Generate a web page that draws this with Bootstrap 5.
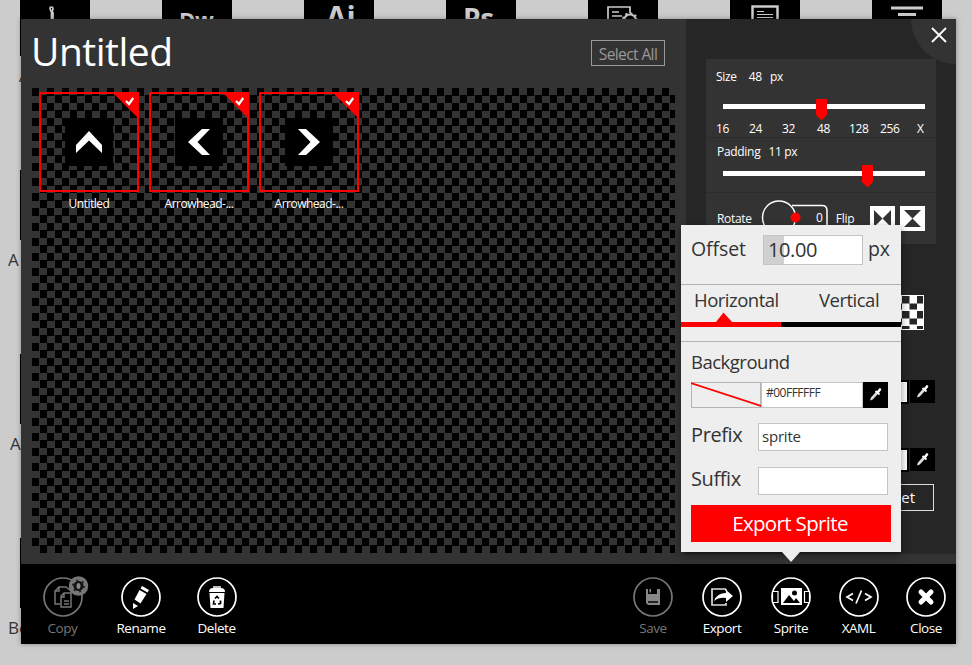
<!DOCTYPE html>
<html lang="en">
<head>
<meta charset="utf-8">
<meta name="viewport" content="width=device-width, initial-scale=1">
<title>Untitled</title>
<link href="https://cdn.jsdelivr.net/npm/bootstrap@5.3.0/dist/css/bootstrap.min.css" rel="stylesheet">
<style>
body{width:972px;height:665px;overflow:hidden;background:#ccc;color:#333;font-family:"Open Sans","Noto Sans",sans-serif;line-height:1;letter-spacing:-.02em}
svg{display:block;flex:none}
/* icon library behind the dialog */
.library{padding:0 0 0 20px;height:665px;overflow:hidden}
.library-row{height:184px;gap:72px}
.library-row:first-child{height:170px}
.library-row:first-child .tile{height:56px}
.library-row:last-child{height:127px}
.tile{width:70px;height:70px;background:#000}
.tile-name{font-size:17px;margin-top:11px;letter-spacing:0}
.shift-a{margin-left:-1px}.shift-b{margin-left:-12px}.shift-c{margin-left:-10px}
/* dialog */
.editor{left:21px;top:19px;width:935px;height:625px;background:#333;box-shadow:0 0 5px rgba(0,0,0,.35)}
.editor-body{height:545px}
.canvas-side{width:665px;padding:0 11px}
.canvas-head{height:69px;padding:21px 10px 0 0}
.doc-title{font-size:39px;line-height:1;margin:-9px 0 0 -1px;font-weight:400;letter-spacing:-.5px;color:#fff}
.btn-select{width:74px;height:26px;border:1px solid #999;color:#999;font-size:15.5px;border-radius:0;padding:0;letter-spacing:-.6px;line-height:26px}
.checker{width:643px;height:465px;background:#000 conic-gradient(#333 25%,#000 0 50%,#333 0 75%,#000 0) 0 0/15px 15px;padding:4px 0 0 7px;gap:10px}
.thumb{width:100px}
.thumb-frame{width:100px;height:100px;border:2px solid red}
.thumb-name{font-size:12px;margin-top:6px;letter-spacing:-.5px}
/* properties side */
.props{width:270px;height:535px;background:#262626;padding:40px 20px 0}
.props-panel{width:230px;height:185px;background:#333;font-size:12px;letter-spacing:-.3px}
.sec-size{height:79px;padding:12px 11px 0 10px;border-bottom:1px solid #2d2d2d}
.sec-pad{height:55px;padding:8px 11px 0;border-bottom:1px solid #2d2d2d}
.sec-pad svg{margin-top:7px}
.ticks{display:grid;grid-template-columns:33px 33px 35px 32px 31px 37px 1fr;margin-top:2px}
.rotate-row{height:50px;padding:6px 11px 0}
.rotate-row span{padding-top:14px}
.closer{right:0;top:0}
.alpha-btn{width:34px;height:35px;margin-top:51px;margin-right:12px}
.color-row{height:24px;margin-right:1px}
.color-row span{width:60px;background:#fff;border:2px solid #000;margin-right:1px}
.first-color{margin-top:50px}.second-color{margin-top:44px}
.btn-reset{width:80px;height:27px;border:1px solid #ddd;color:#fff;border-radius:0;font-size:15px;padding:0 18px 0 0;margin:12px 2px 0 0;text-align:right}
/* app bar */
.appbar{height:80px;background:#000;color:#fff;font-size:13.5px;letter-spacing:-.45px}
.bar-left{display:grid;grid-template-columns:83px 74px 77px}
.bar-right{display:grid;grid-template-columns:60px 78px 60px 75px 60px}
.tool{padding-top:10px}
.tool span{margin-top:2px}
.off{color:#777}
/* sprite flyout */
.flyout{left:660px;top:206px;width:220px;height:327px;background:#eee;box-shadow:0 3px 8px rgba(0,0,0,.45);font-size:19.5px;letter-spacing:-.1px}
.flyout-tip{left:101px;top:327px}
.offset-row{height:60px;padding:10px 10px 0;border-bottom:1px solid #b4b4b4}
.offset-row span:first-child{width:57px}
.offset-box{width:100px;height:30px;border:1px solid #c4c4c4;margin-left:15px;margin-right:5px;background:linear-gradient(90deg,#d0d0d0 20px,#fff 0);padding:4px 4px;font-size:20px;letter-spacing:-.4px}
.tabs-row{height:57px;border-bottom:1px solid #b4b4b4;font-size:18.5px;letter-spacing:-.5px}
.tab-h{padding:6px 0 0 13px;width:138px}
.tab-v{padding-top:6px}
.tabs-row svg{margin-top:1px}
.bg-label{padding:11px 10px 0;height:40px;letter-spacing:-.5px;font-size:18.5px}
.bg-row{height:26px;padding-left:10px}
.hex{width:102px;border:1px solid #c4c4c4;background:#fff;font-size:12px;padding:4px 4px;letter-spacing:-.5px}
.field-row{height:44px;padding:0 13px 0 10px}
.field-row.first{margin-top:15px}
.field-row.last{height:38px}
.field-row label{width:67px;padding-top:2px;font-size:20px;letter-spacing:-.4px}
.field-row input{width:130px;height:28px;border:1px solid #c4c4c4;border-radius:0;padding:0 3px 2px;font-size:15px;color:#333;background:#fff;letter-spacing:-.2px}
.btn-sprite{width:200px;height:37px;margin-left:10px;background:red;color:#fff;border:0;border-radius:0;font-size:20.5px;padding:0 2px 0 0;letter-spacing:-.65px;line-height:37px;display:block}
</style>
<script src="https://cdn.jsdelivr.net/npm/bootstrap@5.3.0/dist/js/bootstrap.bundle.min.js"></script>
</head>
<body class="position-relative">
<svg width="0" height="0" class="position-absolute"><defs>
<g id="dropper"><rect width="25" height="23" fill="#000"/><path d="M7 17.500l.8-2.800 5-5.600 2 1.800-5 5.700z" fill="#ddd"/><path d="M12.500 8l4 3.500" stroke="#fff" stroke-width="1.800"/><path d="M15 9l2-2.500" stroke="#fff" stroke-width="2.600" stroke-linecap="round"/></g>
<g id="tick"><path d="M0 0h24v24z" fill="red"/><path d="M13 8l3 3 4.200-6" fill="none" stroke="#fff" stroke-width="2.200"/></g>
</defs></svg>

<div class="library">
  <div class="library-row d-flex">
    <div><div class="tile"><svg width="70" height="56"><path d="M31.500 20v-8q-3-5 0-5t0 6M33 12v7" fill="none" stroke="#ccc" stroke-width="1.700"/></svg></div><div class="tile-name shift-a">A</div></div>
    <div class="tile"><svg width="70" height="56"><text x="17" y="28" font-size="22" font-weight="700" fill="#ccc">Dw</text></svg></div>
    <div class="tile"><svg width="70" height="56"><text x="22" y="28" font-size="30" font-weight="700" fill="#ccc">Ai</text></svg></div>
    <div class="tile"><svg width="70" height="56"><text x="17" y="29" font-size="28" font-weight="700" fill="#ccc">Ps</text></svg></div>
    <div class="tile"><svg width="70" height="56"><path d="M20 22V7h22v6M24 12h7M24 16h10" fill="none" stroke="#ccc" stroke-width="1.700"/><circle cx="42" cy="20.500" r="6" fill="#000" stroke="#ccc" stroke-width="2.200"/><circle cx="42" cy="20.500" r="7.500" fill="none" stroke="#ccc" stroke-width="1.500" stroke-dasharray="2.500 2.500"/></svg></div>
    <div class="tile"><svg width="70" height="56"><path d="M22.500 22V6.500h25V22" fill="none" stroke="#ccc" stroke-width="2.500"/><path d="M27 11.500h7M27 14.500h16M27 17.500h16" stroke="#ccc"/></svg></div>
    <div class="tile"><svg width="70" height="56"><path d="M19 8h32M26 14.500h18" stroke="#ccc" stroke-width="3"/></svg></div>
  </div>
  <div class="library-row"><div class="tile"></div><div class="tile-name shift-b">A</div></div>
  <div class="library-row"><div class="tile"></div><div class="tile-name shift-c">A</div></div>
  <div class="library-row"><div class="tile"></div><div class="tile-name shift-b">Be</div></div>
</div>

<main class="editor position-absolute">
  <div class="editor-body d-flex">
    <section class="canvas-side">
      <header class="canvas-head d-flex justify-content-between align-items-start">
        <h1 class="doc-title">Untitled</h1>
        <button class="btn btn-select">Select All</button>
      </header>
      <div class="checker d-flex">
        <div class="thumb text-center text-white"><div class="thumb-frame"><svg width="96" height="96"><rect x="24" y="24" width="48" height="48"/><path d="M35 51L48 37 61 51V59L48 46.500 35 59z" fill="#fff"/><use href="#tick" x="72" y="-1"/></svg></div><div class="thumb-name">Untitled</div></div>
        <div class="thumb text-center text-white"><div class="thumb-frame"><svg width="96" height="96"><rect x="24" y="24" width="48" height="48"/><path d="M51 35L37 48 51 61H59L46.500 48 59 35z" fill="#fff"/><use href="#tick" x="72" y="-1"/></svg></div><div class="thumb-name">Arrowhead-...</div></div>
        <div class="thumb text-center text-white"><div class="thumb-frame"><svg width="96" height="96"><rect x="24" y="24" width="48" height="48"/><path d="M45 35L59 48 45 61H37L49.500 48 37 35z" fill="#fff"/><use href="#tick" x="72" y="-1"/></svg></div><div class="thumb-name">Arrowhead-...</div></div>
      </div>
    </section>
    <aside class="props">
      <div class="props-panel text-white">
        <div class="sec-size">
          <div class="d-flex"><span>Size</span><span class="ms-2 ps-1">48</span><span class="ms-2">px</span></div>
          <svg class="mt-3" width="209" height="22"><path d="M7 5h202v5H7z" fill="#fff"/><path d="M100 -1h11v17l-5.500 5.500L100 16z" fill="red"/></svg>
          <div class="ticks"><span>16</span><span>24</span><span>32</span><span>48</span><span>128</span><span>256</span><span>X</span></div>
        </div>
        <div class="sec-pad">
          <div class="d-flex"><span>Padding</span><span class="ms-2">11 px</span></div>
          <svg width="210" height="24"><path d="M6 6h202v5H6z" fill="#fff"/><path d="M145 0h11v17l-5.500 5.500L145 17z" fill="red"/></svg>
        </div>
        <div class="rotate-row d-flex">
          <span>Rotate</span>
          <svg class="ms-2" width="72" height="38"><path d="M32 6.500H62q5 0 5 5V27H36" fill="none" stroke="#fff" stroke-width="1.500"/><circle cx="19" cy="18.500" r="16.500" fill="#333" stroke="#fff" stroke-width="1.500"/><circle cx="35.500" cy="18.500" r="5" fill="red"/><text x="56" y="22.500" font-size="12" fill="#fff">0</text></svg>
          <span class="ms-1">Flip</span>
          <svg class="ms-auto mt-1" width="55" height="28"><path d="M0 3h25v25H0zM30 3h25v25H30z" fill="#fff"/><path d="M4 7v17l8.500-8.500zM21 7v17l-8.500-8.500zM34 7h17l-8.500 8.500zM34 24h17l-8.500-8.500z" fill="#333"/></svg>
        </div>
      </div>
      <svg class="alpha-btn ms-auto" width="34" height="35"><defs><pattern id="cells" width="15" height="15" patternUnits="userSpaceOnUse" patternTransform="translate(10 0)"><rect width="15" height="15" fill="#fff"/><path d="M2 1h7.500v7.500H2zM9.500 8.500h5.500v6H9.500zM0 8.500h2v6H0z" fill="#262626"/></pattern></defs><rect x=".5" y=".5" width="33" height="34" fill="url(#cells)" stroke="#fff"/></svg>
      <div class="color-row first-color d-flex justify-content-end"><span></span><svg width="25" height="23"><use href="#dropper"/></svg></div>
      <div class="color-row second-color d-flex justify-content-end"><span></span><svg width="25" height="23"><use href="#dropper"/></svg></div>
      <button class="btn btn-reset d-block ms-auto">Reset</button>
    </aside>
    <svg class="closer position-absolute" width="45" height="45"><path d="M0 0h45v45A45 45 0 0 1 0 0z" fill="#333"/><path d="M21 9l14 14M35 9L21 23" stroke="#fff" stroke-width="1.800"/></svg>
  </div>

  <footer class="appbar d-flex justify-content-between">
    <div class="bar-left">
      <div class="tool off d-flex flex-column align-items-center"><svg width="54" height="46" viewBox="-27 -23 54 46" fill="none" stroke="#777"><circle r="19" stroke-width="1.700"/><path d="M-3 7H-8V-6l4-4H3l5 4v2M-4-10v4h-4" stroke-width="1.500"/><path d="M-2 10V-1l3-3H8V10zM1-4V0H-2M1 4H6M1 7H6" fill="#000" stroke-width="1.500"/><circle cx="15.500" cy="-11" r="7" fill="#111" stroke-width="4"/><circle cx="15.500" cy="-11" r="5.500" stroke="#222" stroke-width="2" stroke-dasharray="2 3.760"/><circle cx="15.500" cy="-11" r="9" stroke-width="1.500"/><ellipse cx="15.500" cy="-11" rx="2" ry="3" fill="#888" stroke="none"/></svg><span>Copy</span></div>
      <div class="tool d-flex flex-column align-items-center"><svg width="46" height="46" viewBox="-23 -23 46 46"><circle r="19" fill="none" stroke="#fff" stroke-width="1.700"/><path d="M1-11l7 4-1.500 2.500-7-4zM-1.500-7l7 4-6 9.500-6-4zM-8 6l5 3-5 3z" fill="#fff"/></svg><span>Rename</span></div>
      <div class="tool d-flex flex-column align-items-center"><svg width="46" height="46" viewBox="-23 -23 46 46"><circle r="19" fill="none" stroke="#fff" stroke-width="1.700"/><path d="M-8-5q0-4 4-4H4q4 0 4 4zM-7.500-4H7.500L6.500 11h-13z" fill="#fff"/><path d="M-4-10H4" stroke="#fff" stroke-width="1.500"/><path d="M-8-4.500H8" stroke="#000"/><path d="M-2 1.500L0-.5 2 1.500M3.500 3.500L3.500 6.500 1 7M-1 7H-3.500L-3 3.500" fill="none" stroke="#000" stroke-width="1.700"/></svg><span>Delete</span></div>
    </div>
    <div class="bar-right">
      <div class="tool off d-flex flex-column align-items-center"><svg width="46" height="46" viewBox="-23 -23 46 46"><circle r="19" fill="none" stroke="#777" stroke-width="1.700"/><path d="M-7-8h2v5H4v-5H7V8H-5L-7 6zM-3.500-8h1.500v3.500h-1.500z" fill="#888"/><path d="M-5 5H5" stroke="#000" stroke-width="1.500"/></svg><span>Save</span></div>
      <div class="tool d-flex flex-column align-items-center"><svg width="46" height="46" viewBox="-23 -23 46 46"><circle r="19" fill="none" stroke="#fff" stroke-width="1.700"/><path d="M4-8H-10V8H4V6M4-8v2" fill="none" stroke="#ddd" stroke-width="1.700"/><path d="M-8 4Q-5-4 4-4V-7L11-1 4 5V1Q-3 0-8 4z" fill="#fff"/></svg><span>Export</span></div>
      <div class="tool d-flex flex-column align-items-center"><svg width="46" height="46" viewBox="-23 -23 46 46"><circle r="19" fill="none" stroke="#fff" stroke-width="1.700"/><path d="M-18.500-5.500h5.500v11h-5.500zM13.500-5.500h5v11h-5z" fill="#000" stroke="#fff" stroke-width="1.200"/><path d="M-10-9H11V8H-10z" fill="#fff"/><path d="M-8 6L-2-2 3 4 5 1 9 6z"/><circle cx="3.500" cy="-4" r="2.500"/></svg><span>Sprite</span></div>
      <div class="tool d-flex flex-column align-items-center"><svg width="46" height="46" viewBox="-23 -23 46 46" fill="none" stroke="#fff" stroke-width="1.700"><circle r="19"/><path d="M-6-3.500L-12 0-6 3.500M6-3.500L12 0 6 3.500M2.500-6.500L-3 6.500"/></svg><span>XAML</span></div>
      <div class="tool d-flex flex-column align-items-center"><svg width="46" height="46" viewBox="-23 -23 46 46" fill="none" stroke="#fff"><circle r="19" stroke-width="1.700"/><path d="M-5-5L5 5M5-5L-5 5" stroke-width="5" stroke-linecap="round"/></svg><span>Close</span></div>
    </div>
  </footer>

  <div class="flyout position-absolute">
    <div class="offset-row d-flex align-items-start"><span class="pt-1">Offset</span><div class="offset-box">10.00</div><span class="pt-1">px</span></div>
    <div class="tabs-row">
      <div class="d-flex"><span class="tab-h">Horizontal</span><span class="tab-v">Vertical</span></div>
      <svg width="220" height="16"><path d="M0 11h220v5H0z"/><path d="M0 11H35L42.500 1.500 51 11h49v5H0z" fill="red"/></svg>
    </div>
    <div class="bg-label">Background</div>
    <div class="bg-row d-flex"><svg width="70" height="26"><rect x=".5" y=".5" width="69" height="25" fill="#eee" stroke="#b4b4b4"/><path d="M0 1l70 23" stroke="red" stroke-width="1.800"/></svg><div class="hex">#00FFFFFF</div><svg width="25" height="26" viewBox="0 -1 25 26"><rect y="-1" width="25" height="26"/><use href="#dropper"/></svg></div>
    <div class="field-row first d-flex"><label for="prefix">Prefix</label><input id="prefix" value="sprite"></div>
    <div class="field-row last d-flex"><label for="suffix">Suffix</label><input id="suffix"></div>
    <button class="btn btn-sprite">Export Sprite</button>
    <svg class="flyout-tip position-absolute" width="18" height="10"><path d="M0 0h18L9 10z" fill="#eee"/></svg>
  </div>
</main>
</body>
</html>
